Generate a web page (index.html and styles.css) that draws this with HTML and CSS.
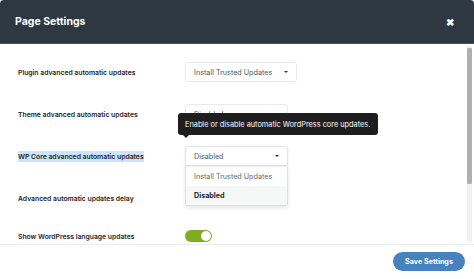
FILE: index.html
```html
<!DOCTYPE html>
<html lang="en">
<head>
    <meta charset="UTF-8">
    <meta name="viewport" content="width=device-width, initial-scale=1.0">
    <title>Page Settings</title>
    <link rel="stylesheet" href="styles.css">
</head>
<body>
    <div class="modal">
        <header class="modal-head">
            <h1>Page Settings</h1>
            <span class="close">&#10006;</span>
        </header>
        <main class="modal-body">
            <div class="rows">
                <div class="row">
                    <label>Plugin advanced automatic updates</label>
                    <div class="select wide">Install Trusted Updates<span class="caret"></span></div>
                </div>
                <div class="row">
                    <label>Theme advanced automatic updates</label>
                    <div class="select">Disabled<span class="caret"></span></div>
                </div>
                <div class="row">
                    <label><span class="picked">WP Core advanced automatic updates</span></label>
                    <div class="select open">Disabled<span class="caret"></span>
                        <ul class="options">
                            <li>Install Trusted Updates</li>
                            <li class="current">Disabled</li>
                        </ul>
                    </div>
                </div>
                <div class="row">
                    <label>Advanced automatic updates delay</label>
                </div>
                <div class="row short">
                    <label>Show WordPress language updates</label>
                    <span class="toggle"><span class="knob"></span></span>
                </div>
            </div>
            <div class="tooltip">Enable or disable automatic WordPress core updates.</div>
            <div class="scrollbar"><div class="thumb"></div></div>
        </main>
        <footer class="modal-foot">
            <button class="save">Save Settings</button>
        </footer>
    </div>
</body>
</html>
```

FILE: styles.css
```css
html, body {
    margin: 0;
    padding: 0;
    background: #e9e9e9;
}

body {
    font-family: Inter, "Noto Sans", sans-serif;
    width: 474px;
    height: 279px;
    overflow: hidden;
}

.modal {
    display: flex;
    flex-direction: column;
    height: 279px;
    background: #fff;
    border-radius: 4px 4px 0 0;
    overflow: hidden;
}

.modal-head {
    height: 43px;
    flex: none;
    display: flex;
    align-items: center;
    justify-content: space-between;
    padding: 0 20px 0 15px;
    background: #2e3841;
    border-bottom: 1px solid #454f58;
}

.modal-head h1 {
    margin: 0;
    color: #fff;
    font-size: 10.5px;
    font-weight: 700;
}

.close {
    color: #fff;
    font-size: 10px;
    font-weight: 700;
}

.modal-body {
    position: relative;
    height: 200px;
    flex: none;
    border-bottom: 1px solid #ececec;
}

.rows {
    padding-top: 7px;
}

.row {
    height: 42px;
    display: flex;
    align-items: center;
    padding-left: 18px;
}

.row.short {
    height: 34px;
}

.row label {
    width: 167px;
    font-size: 6.8px;
    font-weight: 600;
    color: #1d2327;
}

.picked {
    background: #cde3f8;
    padding: 1px 0;
}

.select {
    position: relative;
    width: 103px;
    height: 20px;
    box-sizing: border-box;
    display: flex;
    align-items: center;
    padding-left: 8px;
    border: 1px solid #eaeaea;
    border-radius: 3px;
    font-size: 7.2px;
    color: #50575e;
    background: #fff;
}

.select.wide {
    width: 112px;
}

.select.open {
    border-radius: 3px 3px 0 0;
    border-color: #e0e4e8;
    box-shadow: 0 1px 3px rgba(0, 0, 0, 0.08);
}

.caret {
    position: absolute;
    right: 8px;
    top: 8px;
    border-left: 2px solid transparent;
    border-right: 2px solid transparent;
    border-top: 2.5px solid #333;
}

.options {
    position: absolute;
    left: -1px;
    right: -1px;
    top: 19px;
    margin: 0;
    padding: 0;
    list-style: none;
    background: #fff;
    border: 1px solid #dcdfe3;
    border-top-color: #eee;
    border-radius: 0 0 3px 3px;
    box-shadow: 0 2px 4px rgba(0, 0, 0, 0.1);
}

.options li {
    height: 19px;
    display: flex;
    align-items: center;
    padding-left: 8px;
    font-size: 7.2px;
    color: #646970;
}

.options li.current {
    background: #f6f7f7;
    font-weight: 700;
    color: #23282d;
}

.toggle {
    position: relative;
    width: 27px;
    height: 12px;
    border-radius: 6px;
    background: #7fad1f;
}

.knob {
    position: absolute;
    right: 1px;
    top: 1px;
    width: 10px;
    height: 10px;
    border-radius: 50%;
    background: #fff;
}

.tooltip {
    position: absolute;
    left: 178px;
    top: 69px;
    width: 200px;
    height: 22px;
    box-sizing: border-box;
    display: flex;
    align-items: center;
    padding-left: 7px;
    background: #1e1e1e;
    color: #fff;
    font-size: 7.35px;
    border-radius: 3px;
}

.tooltip::after {
    content: "";
    position: absolute;
    left: 5px;
    bottom: -3px;
    border-left: 3px solid transparent;
    border-right: 3px solid transparent;
    border-top: 3px solid #1e1e1e;
}

.scrollbar {
    position: absolute;
    right: 2px;
    top: 2px;
    bottom: 2px;
    width: 5px;
    background: #f0f0f0;
}

.thumb {
    height: 136px;
    margin-top: 2px;
    background: #b0b0b0;
    border-radius: 1px;
}

.modal-foot {
    flex: 1;
    display: flex;
    justify-content: flex-end;
    align-items: center;
    padding: 0 9px 0 0;
}

.save {
    width: 72px;
    height: 19px;
    border: none;
    border-radius: 10px;
    background: #4682c0;
    color: #fff;
    font-family: Inter, sans-serif;
    font-size: 7.2px;
    font-weight: 700;
    margin-top: -1px;
}
```
